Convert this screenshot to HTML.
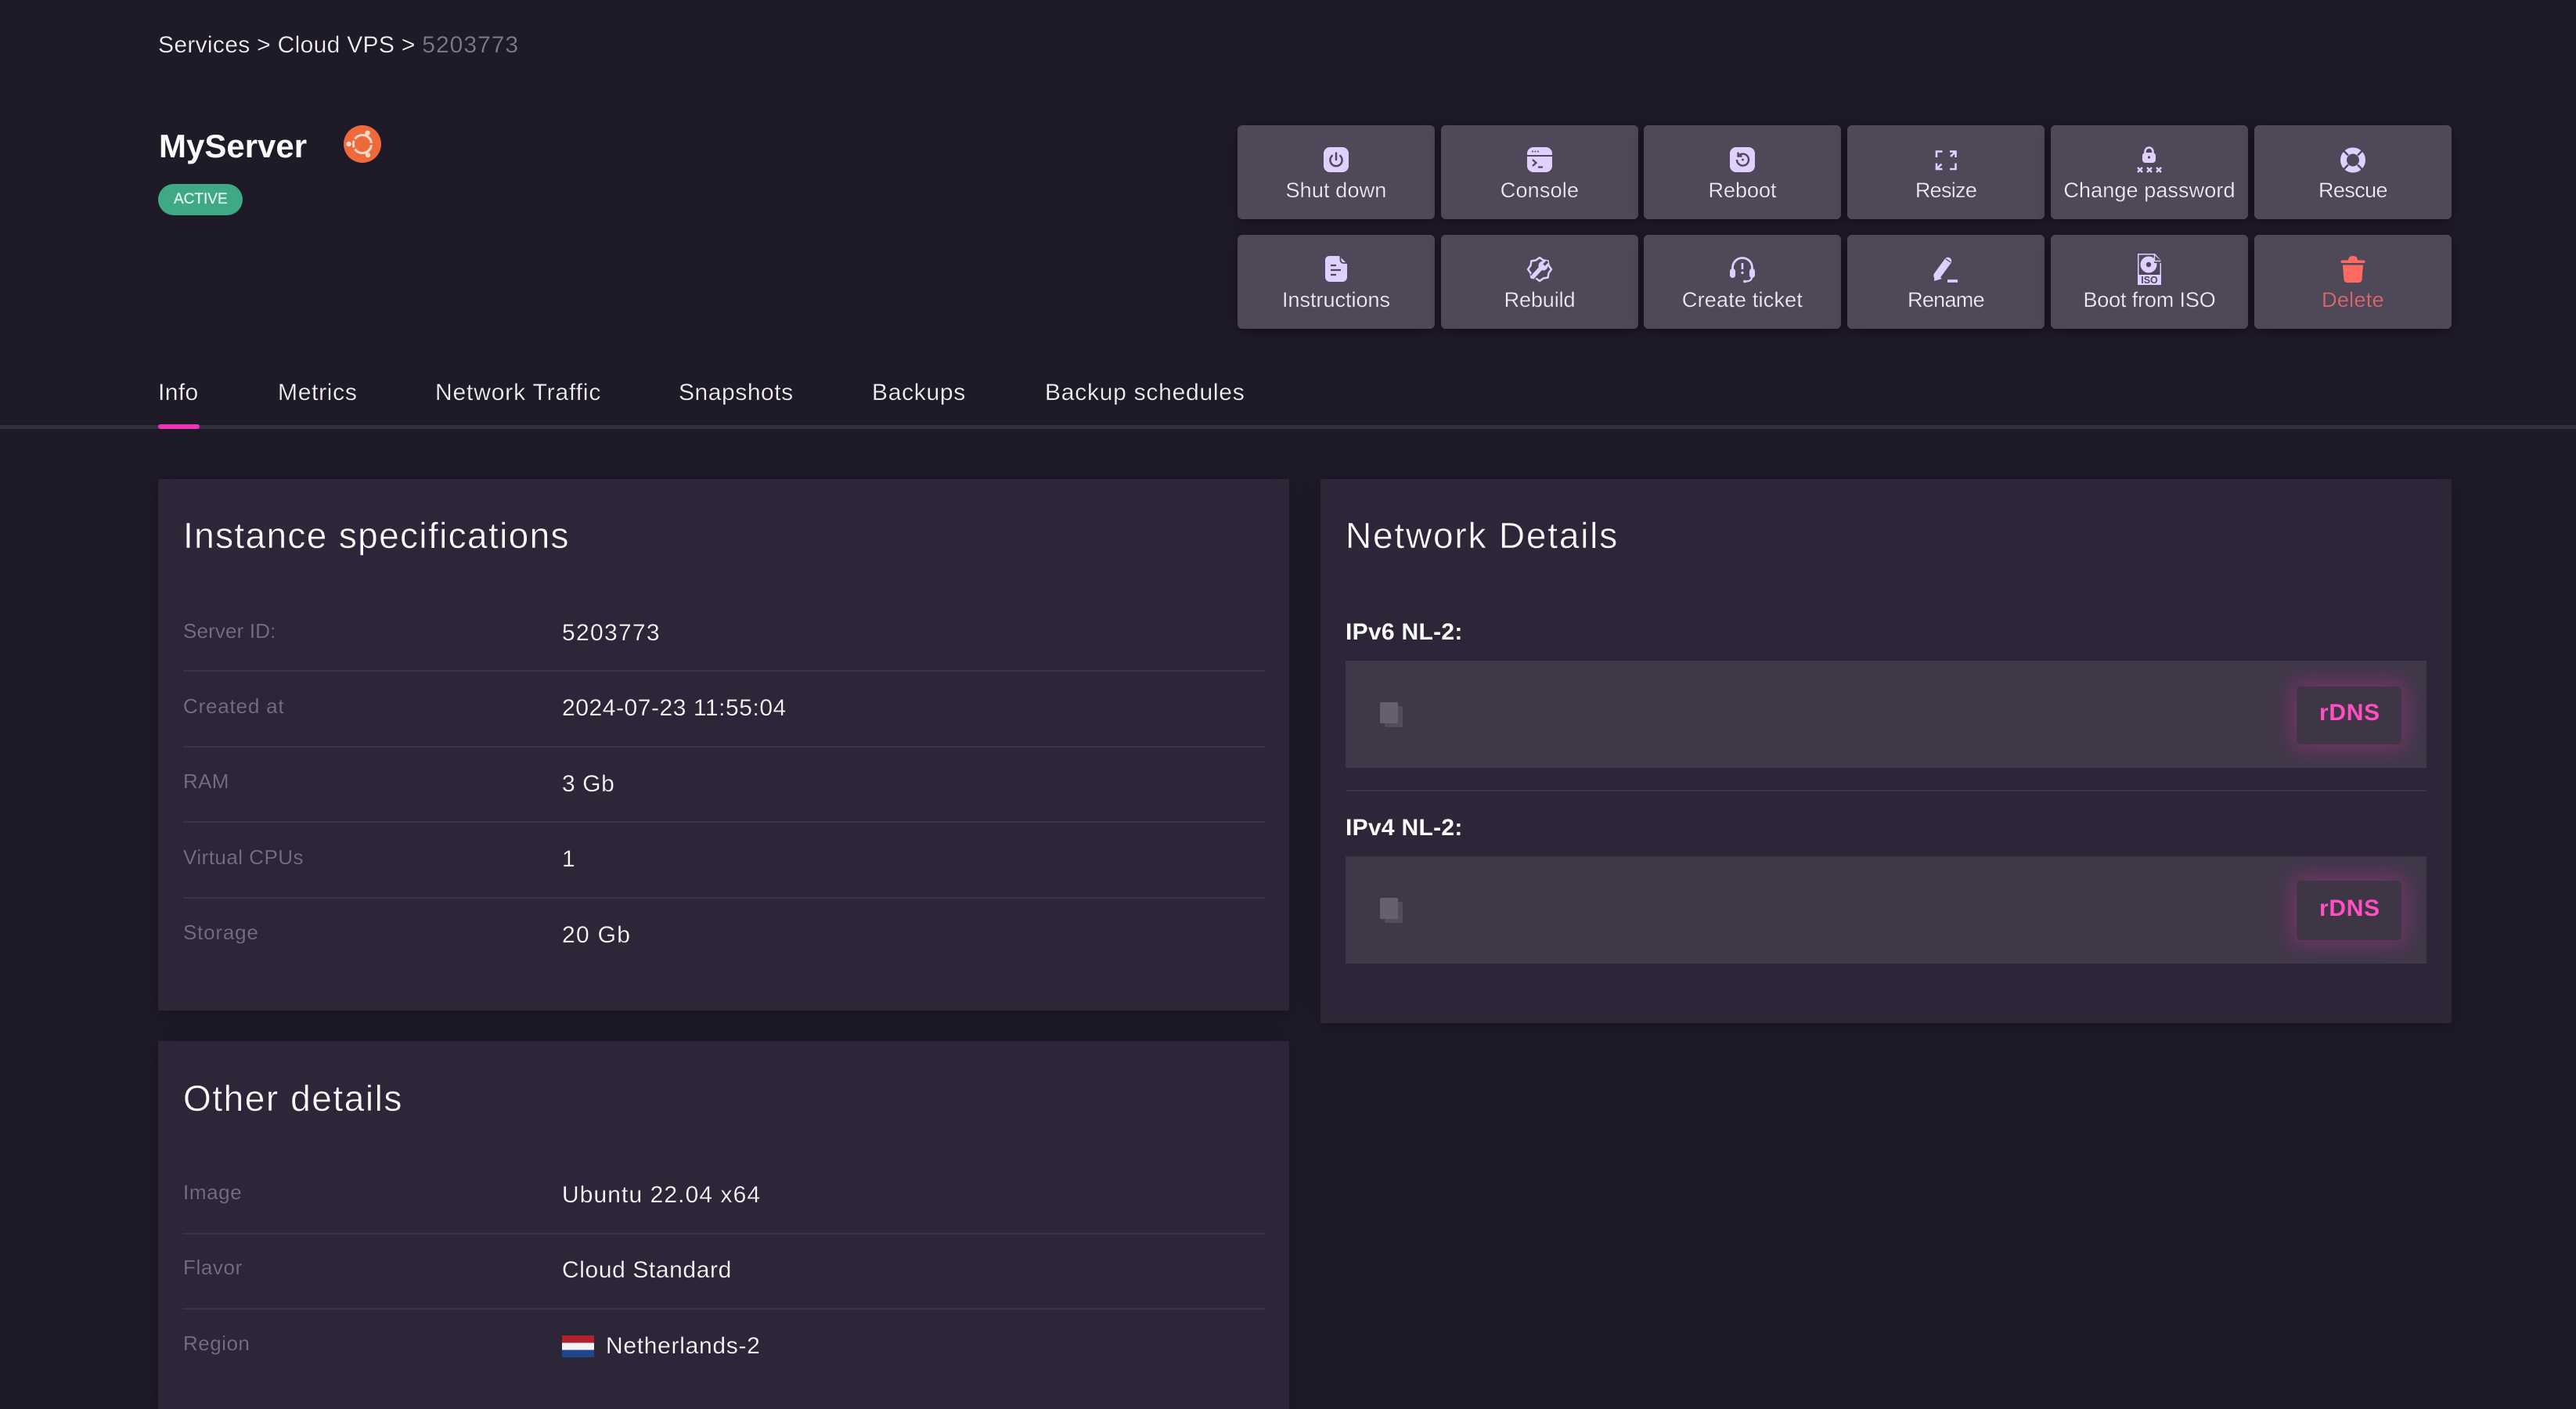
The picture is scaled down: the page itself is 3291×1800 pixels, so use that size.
<!DOCTYPE html>
<html lang="en"><head><meta charset="utf-8"><title>MyServer</title>
<style>
html,body{margin:0;padding:0;background:#1f1a28;width:3291px;height:1800px;overflow:hidden;}
#root{position:relative;width:3291px;height:1800px;overflow:hidden;font-family:"Liberation Sans",sans-serif;color:#f3f1f6;}
.t{position:absolute;white-space:nowrap;line-height:0;top:calc(var(--b) - .3465em);font-size:30px;}
.nav{-webkit-text-stroke:.3px #1f1a28;}
.lb{font-size:26px;color:#767182;left:234px;-webkit-text-stroke:.2px #2d2639;}
.v{left:718px;-webkit-text-stroke:.25px #2d2639;color:#fbfafc;}
.h{font-size:46px;color:#fbfafc;-webkit-text-stroke:.5px #2d2639;}
.b{font-weight:700;color:#fbfafc;}
.card{position:absolute;background:#2d2639;box-shadow:0 4px 24px rgba(0,0,0,.34);border-radius:2px;}
.dv{position:absolute;height:2px;background:#3a3445;}
.btn{position:absolute;width:252px;height:120px;background:#4f4859;border-radius:6px;box-shadow:0 4px 16px rgba(0,0,0,.42);}
.btn svg{position:absolute;left:102px;top:24px;width:48px;height:48px;overflow:visible;}
.btn span{position:absolute;left:0;width:252px;top:calc(92px - .3465em);line-height:0;text-align:center;font-size:27px;color:#f0edf5;white-space:nowrap;-webkit-text-stroke:.3px #4f4859;}
.block{position:absolute;left:1719px;width:1381px;background:#403849;}
.rd{position:absolute;left:2934px;width:134px;background:#3e3644;border-radius:6px;box-shadow:0 0 26px 6px rgba(238,50,180,.3);}
.pk{color:#ff4fc3;font-weight:700;letter-spacing:.7px;}
</style></head><body><div id="root">

<div class="t nav" style="left:202px;--b:68px;letter-spacing:.31px;color:#f3f1f6">Services &gt; Cloud VPS &gt; <span style="color:#7f7b8c;letter-spacing:1px">5203773</span></div>

<div class="t b" style="left:203px;--b:202px;font-size:42px">MyServer</div>
<svg style="position:absolute;left:439px;top:160px" width="48" height="48" viewBox="0 0 48 48">
<circle cx="24" cy="24" r="24" fill="#ef6a3b"/>
<circle cx="24" cy="24" r="11.500" fill="none" stroke="#fbdccb" stroke-width="3"/>
<g stroke="#ef6a3b" stroke-width="2.500"><path d="M24 24L11 17M24 24L11 31M24 24L38 24"/></g>
<circle cx="30.500" cy="10" r="3.200" fill="#fbdccb"/><circle cx="6.500" cy="24" r="3.200" fill="#fbdccb"/><circle cx="31" cy="38" r="3.200" fill="#fbdccb"/>
</svg>
<div style="position:absolute;left:202px;top:235px;width:108px;height:40px;border-radius:20px;background:#3fa884"></div>
<div class="t" style="left:222px;--b:261.500px;font-size:19px;color:#e2f7ef;-webkit-text-stroke:.3px #e2f7ef">ACTIVE</div>

<!-- action buttons row 1 -->
<div class="btn" style="left:1581px;top:160px"><svg viewBox="0 0 48 48"><rect x="8" y="4" width="32" height="32" rx="8" fill="#e0d0ff"/><path d="M18.800 15a7.600 7.600 0 1 0 10.400 0M24 11.500v8.500" fill="none" stroke="#4f4859" stroke-width="2.500" stroke-linecap="round"/></svg><span style="letter-spacing:.15px">Shut down</span></div>
<div class="btn" style="left:1841px;top:160px"><svg viewBox="0 0 48 48"><rect x="8" y="4" width="32" height="32" rx="8" fill="#e0d0ff"/><rect x="8" y="14" width="32" height="2" fill="#4f4859"/><g fill="#4f4859"><circle cx="15" cy="9.500" r="1"/><circle cx="18.500" cy="9.500" r="1"/><circle cx="22" cy="9.500" r="1"/></g><path d="M15 20l4.500 4-4.500 4M22 29.500h6" fill="none" stroke="#4f4859" stroke-width="2.200"/></svg><span style="letter-spacing:.2px">Console</span></div>
<div class="btn" style="left:2100px;top:160px"><svg viewBox="0 0 48 48"><rect x="8" y="4" width="32" height="32" rx="8" fill="#e0d0ff"/><path d="M19.500 14.500A7.500 7.500 0 1 1 17 20" fill="none" stroke="#4f4859" stroke-width="2.400"/><path d="M18.500 10.500v5h5" fill="none" stroke="#4f4859" stroke-width="2.400"/><circle cx="24.500" cy="20" r="1.400" fill="#4f4859"/></svg><span>Reboot</span></div>
<div class="btn" style="left:2360px;top:160px"><svg viewBox="0 0 48 48"><path d="M12 17V9.500h7.500M29 9.500h7.500V17M36.500 9.500L30 16M12 24.500V32h7.500M12 32l6.500-6.500M36.500 24.500V32H29" fill="none" stroke="#e0d0ff" stroke-width="2.600"/></svg><span style="letter-spacing:-.7px">Resize</span></div>
<div class="btn" style="left:2620px;top:160px"><svg viewBox="0 0 48 48"><path d="M18.500 12V9.500a5 5 0 0 1 10 0V12" fill="none" stroke="#e0d0ff" stroke-width="2.500"/><rect x="15" y="11" width="17" height="13" rx="4" fill="#e0d0ff"/><circle cx="23.500" cy="17" r="1.600" fill="#4f4859"/><path d="M9 30l6 6M15 30l-6 6M21 30l6 6M27 30l-6 6M33 30l6 6M39 30l-6 6" stroke="#e0d0ff" stroke-width="2.400"/></svg><span style="letter-spacing:.1px">Change password</span></div>
<div class="btn" style="left:2880px;top:160px"><svg viewBox="0 0 48 48"><circle cx="24" cy="20.500" r="12" fill="none" stroke="#e0d0ff" stroke-width="8"/><path d="M18 14.500L12 8.500M30 14.500L36 8.500M18 26.500L12 32.500M30 26.500L36 32.500" stroke="#4f4859" stroke-width="2.400"/></svg><span style="letter-spacing:-.6px">Rescue</span></div>

<!-- action buttons row 2 -->
<div class="btn" style="left:1581px;top:300px"><svg viewBox="0 0 48 48"><path d="M15 3H28L38 13V30a6 6 0 0 1-6 6H16a6 6 0 0 1-6-6V8a5 5 0 0 1 5-5z" fill="#e0d0ff"/><path d="M29.500 2.500V8a4 4 0 0 0 4 4H38.500" fill="none" stroke="#4f4859" stroke-width="1.800"/><path d="M17 15h7M17 21h13M17 27h7" stroke="#4f4859" stroke-width="2.300"/></svg><span>Instructions</span></div>
<div class="btn" style="left:1841px;top:300px"><svg viewBox="0 0 48 48"><path d="M39 20L35.500 24.800 34.600 30.600 28.800 31.500 24 35 19.200 31.500 13.400 30.600 12.500 24.800 9 20 12.500 15.200 13.400 9.400 19.200 8.500 24 5 28.800 8.500 34.600 9.400 35.500 15.200Z" fill="none" stroke="#e0d0ff" stroke-width="2.500" stroke-linejoin="round"/><path d="M15 30L28 16" stroke="#4f4859" stroke-width="8.500"/><path d="M15.500 29.500L26 18" stroke="#e0d0ff" stroke-width="5.500" stroke-linecap="round"/><circle cx="28.500" cy="15.500" r="6" fill="#e0d0ff"/><path d="M29.500 14.500L34 10" stroke="#4f4859" stroke-width="3.500"/></svg><span style="letter-spacing:-.1px">Rebuild</span></div>
<div class="btn" style="left:2100px;top:300px"><svg viewBox="0 0 48 48"><path d="M11.500 21V18a12.500 12.500 0 0 1 25 0v3" fill="none" stroke="#e0d0ff" stroke-width="2.800"/><rect x="8" y="19" width="7" height="12" rx="3.500" fill="#e0d0ff"/><rect x="33" y="19" width="7" height="12" rx="3.500" fill="#e0d0ff"/><path d="M36 30c0 4-4 5.500-8 5.500" fill="none" stroke="#e0d0ff" stroke-width="2.400"/><circle cx="27" cy="35.500" r="1.800" fill="#e0d0ff"/><path d="M24 12v8" stroke="#e0d0ff" stroke-width="2.600"/><circle cx="24" cy="24.500" r="1.600" fill="#e0d0ff"/></svg><span style="letter-spacing:.2px">Create ticket</span></div>
<div class="btn" style="left:2360px;top:300px"><svg viewBox="0 0 48 48"><path d="M13 28L26.500 9.500" stroke="#e0d0ff" stroke-width="9.500" stroke-linecap="round"/><path d="M9 35L9.500 25 19 32Z" fill="#e0d0ff"/><path d="M26 35h13" stroke="#e0d0ff" stroke-width="3.600"/><path d="M23.500 6.500L30 11" stroke="#4f4859" stroke-width="1.200"/></svg><span style="letter-spacing:-.7px">Rename</span></div>
<div class="btn" style="left:2620px;top:300px"><svg viewBox="0 0 48 48"><path d="M9 0H31L39 9V40H9Z" fill="#e0d0ff"/><path d="M10.500 1.500H30.500L37.500 9.500V27H10.500Z" fill="#4f4859"/><circle cx="23" cy="14" r="10.500" fill="#e0d0ff"/><circle cx="23" cy="14" r="3.200" fill="#4f4859"/><path d="M30 2L39 9V12H30Z" fill="#4f4859"/><path d="M30.500 .5V9.500H38.500" fill="none" stroke="#e0d0ff" stroke-width="1.500"/><text x="24" y="38" text-anchor="middle" font-family="Liberation Sans,sans-serif" font-weight="700" font-size="12.500" fill="#4f4859">ISO</text></svg><span style="letter-spacing:-.15px">Boot from ISO</span></div>
<div class="btn" style="left:2880px;top:300px"><svg viewBox="0 0 48 48"><path d="M18 9q0-6 6-6t6 6z" fill="#ff6b62"/><rect x="8.500" y="8.500" width="31" height="3.500" rx="1.700" fill="#ff6b62"/><path d="M11 14.500H37L35.500 33a4 4 0 0 1-4 4H16.500a4 4 0 0 1-4-4Z" fill="#ff6b62"/></svg><span style="letter-spacing:.3px;color:#e0686d">Delete</span></div>

<!-- tabs -->
<div style="position:absolute;left:0;top:543px;width:3291px;height:5px;background:#33303c"></div>
<div style="position:absolute;left:202px;top:542px;width:53px;height:6px;border-radius:3px;background:#ee34b7"></div>
<div class="t nav" style="left:202px;--b:512px;letter-spacing:.4px">Info</div>
<div class="t nav" style="left:355px;--b:512px;letter-spacing:.7px">Metrics</div>
<div class="t nav" style="left:556px;--b:512px;letter-spacing:.85px">Network Traffic</div>
<div class="t nav" style="left:867px;--b:512px;letter-spacing:.55px">Snapshots</div>
<div class="t nav" style="left:1114px;--b:512px;letter-spacing:.7px">Backups</div>
<div class="t nav" style="left:1335px;--b:512px;letter-spacing:.75px">Backup schedules</div>

<!-- cards -->
<div class="card" style="left:202px;top:612px;width:1445px;height:679px"></div>
<div class="card" style="left:202px;top:1330px;width:1445px;height:470px"></div>
<div class="card" style="left:1687px;top:612px;width:1445px;height:695px"></div>

<div class="t h" style="left:234px;--b:700px;letter-spacing:1.35px">Instance specifications</div>
<div class="t lb" style="--b:815px;letter-spacing:.15px">Server ID:</div><div class="t v" style="--b:819px;letter-spacing:1.3px">5203773</div>
<div class="dv" style="left:234px;width:1382px;top:856px"></div>
<div class="t lb" style="--b:911px;letter-spacing:.8px">Created at</div><div class="t v" style="--b:915px;letter-spacing:.55px">2024-07-23 11:55:04</div>
<div class="dv" style="left:234px;width:1382px;top:953px"></div>
<div class="t lb" style="--b:1007.500px;letter-spacing:.3px">RAM</div><div class="t v" style="--b:1012px;letter-spacing:.6px">3 Gb</div>
<div class="dv" style="left:234px;width:1382px;top:1049px"></div>
<div class="t lb" style="--b:1104px;letter-spacing:.47px">Virtual CPUs</div><div class="t v" style="--b:1108px">1</div>
<div class="dv" style="left:234px;width:1382px;top:1146px"></div>
<div class="t lb" style="--b:1200.500px;letter-spacing:.8px">Storage</div><div class="t v" style="--b:1205px;letter-spacing:1.3px">20 Gb</div>

<div class="t h" style="left:234px;--b:1418.500px;letter-spacing:1.55px">Other details</div>
<div class="t lb" style="--b:1532.500px;letter-spacing:.6px">Image</div><div class="t v" style="--b:1537px;letter-spacing:1.08px">Ubuntu 22.04 x64</div>
<div class="dv" style="left:234px;width:1382px;top:1575px"></div>
<div class="t lb" style="--b:1628.500px;letter-spacing:.6px">Flavor</div><div class="t v" style="--b:1633px;letter-spacing:.6px">Cloud Standard</div>
<div class="dv" style="left:234px;width:1382px;top:1671px"></div>
<div class="t lb" style="--b:1725.500px;letter-spacing:.5px">Region</div>
<div style="position:absolute;left:718px;top:1706px;width:41px;height:28px;background:linear-gradient(#b5202e 0 33.300%,#f3f3f5 33.300% 66.600%,#21468b 66.600%)"></div>
<div class="t v" style="left:774px;--b:1730px;letter-spacing:.7px">Netherlands-2</div>

<!-- network -->
<div class="t h" style="left:1719px;--b:700px;letter-spacing:1.8px">Network Details</div>
<div class="t b" style="left:1719px;--b:818.500px;letter-spacing:.3px">IPv6 NL-2:</div>
<div class="block" style="top:844px;height:137px"></div>
<div class="rd" style="top:877px;height:74px"></div>
<div class="t pk" style="left:2963px;--b:921.500px">rDNS</div>
<svg style="position:absolute;left:1763px;top:897px" width="30" height="33" viewBox="0 0 30 33"><rect x="6" y="5" width="23" height="27" rx="2" fill="#524c5c"/><rect x="0" y="0" width="23" height="27" rx="2" fill="#64606c"/></svg>

<div class="dv" style="left:1719px;width:1381px;top:1009px;background:#3a3445"></div>

<div class="t b" style="left:1719px;--b:1068px;letter-spacing:.3px">IPv4 NL-2:</div>
<div class="block" style="top:1094px;height:137px"></div>
<div class="rd" style="top:1125px;height:76px"></div>
<div class="t pk" style="left:2963px;--b:1171.500px">rDNS</div>
<svg style="position:absolute;left:1763px;top:1147px" width="30" height="33" viewBox="0 0 30 33"><rect x="6" y="5" width="23" height="27" rx="2" fill="#524c5c"/><rect x="0" y="0" width="23" height="27" rx="2" fill="#64606c"/></svg>

</div></body></html>
